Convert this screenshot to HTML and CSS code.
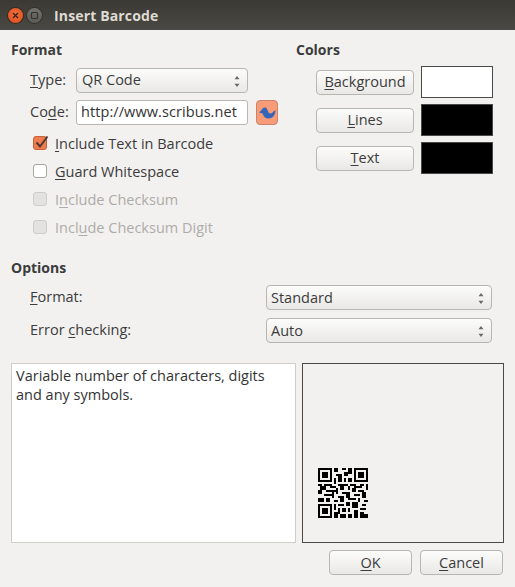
FILE: index.html
```html
<!DOCTYPE html>
<html lang="en">
<head>
<meta charset="utf-8">
<title>Insert Barcode</title>
<link rel="stylesheet" href="styles.css">
</head>
<body>
<div class="window">
  <header class="titlebar">
    <span class="wm wm-close"><svg viewBox="0 0 15 15" width="15" height="15"><path d="M5 5l5 5M10 5l-5 5" stroke="#3a2418" stroke-width="1.4" fill="none"/></svg></span>
    <span class="wm wm-max"><svg viewBox="0 0 15 15" width="15" height="15"><rect x="4.5" y="4.5" width="6" height="6" rx="1" stroke="#33322e" stroke-width="1.2" fill="none"/></svg></span>
    <span class="wm-title">Insert Barcode</span>
  </header>
  <main class="content">
    <div class="top">
      <section class="format">
        <h2 class="heading">Format</h2>
        <div class="field field-first">
          <label class="field-label"><u>T</u>ype:</label>
          <div class="combo combo-type"><span>QR Code</span><svg class="spin" viewBox="0 0 6 11" width="6" height="11"><path d="M3 0L5.5 3.2H0.5zM3 11L0.5 7.8H5.5z" fill="#6a6864"/></svg></div>
        </div>
        <div class="field field-code">
          <label class="field-label">Co<u>d</u>e:</label>
          <div class="input">http://www.scribus.net</div>
          <span class="icon-btn"><svg viewBox="0 0 18 14" width="18" height="14"><path d="M1 6.5L4 3.5C5 1.2 8 .8 9 3L10.5 6.5C12 8 14 7.6 15.5 5.5L17.5 4C17.5 9 14.5 12.5 10.5 12.5C7.5 12.5 5.5 10.5 4.5 7.5z" fill="#3465b8"/></svg></span>
        </div>
        <div class="checks">
          <div class="check"><span class="box box-on"><svg viewBox="0 0 16 16" width="16" height="16"><path d="M3.5 7.5L7 11.5L14.5 1.5" stroke="#4d3a32" stroke-width="2" fill="none"/></svg></span><span><u>I</u>nclude Text in Barcode</span></div>
          <div class="check"><span class="box"></span><span><u>G</u>uard Whitespace</span></div>
          <div class="check check-off"><span class="box"></span><span>I<u>n</u>clude Checksum</span></div>
          <div class="check check-off"><span class="box"></span><span>Incl<u>u</u>de Checksum Digit</span></div>
        </div>
      </section>
      <section class="colors">
        <h2 class="heading">Colors</h2>
        <div class="color-rows">
          <div class="color-row"><button class="btn btn-color"><u>B</u>ackground</button><span class="swatch swatch-white"></span></div>
          <div class="color-row"><button class="btn btn-color"><u>L</u>ines</button><span class="swatch"></span></div>
          <div class="color-row"><button class="btn btn-color"><u>T</u>ext</button><span class="swatch"></span></div>
        </div>
      </section>
    </div>
    <section class="options">
      <h2 class="heading">Options</h2>
      <div class="opt opt-first">
        <label class="opt-label"><u>F</u>ormat:</label>
        <div class="combo combo-wide"><span>Standard</span><svg class="spin" viewBox="0 0 6 11" width="6" height="11"><path d="M3 0L5.5 3.2H0.5zM3 11L0.5 7.8H5.5z" fill="#6a6864"/></svg></div>
      </div>
      <div class="opt">
        <label class="opt-label">Error <u>c</u>hecking:</label>
        <div class="combo combo-wide"><span>Auto</span><svg class="spin" viewBox="0 0 6 11" width="6" height="11"><path d="M3 0L5.5 3.2H0.5zM3 11L0.5 7.8H5.5z" fill="#6a6864"/></svg></div>
      </div>
    </section>
    <div class="panels">
      <div class="desc">Variable number of characters, digits and any symbols.</div>
      <div class="preview">
        <svg class="qr" viewBox="0 0 25 25" width="50" height="50" shape-rendering="crispEdges"><path fill="#000" d="M0 0h7v1H0zM0 6h7v1H0zM0 1h1v5H0zM6 1h1v5H6zM2 2h3v3H2zM18 0h7v1h-7zM18 6h7v1h-7zM18 1h1v5h-1zM24 1h1v5h-1zM20 2h3v3h-3zM0 18h7v1H0zM0 24h7v1H0zM0 19h1v5H0zM6 19h1v5H6zM2 20h3v3H2zM8 0h2v2H8zM12 0h2v1h-2zM15 0h2v3h-2zM9 3h3v1H9zM13 2h2v2h-2zM8 5h1v3H8zM10 4h2v3h-2zM13 5h1v2h-1zM15 5h2v2h-2zM0 8h2v1H0zM3 8h4v1H3zM10 8h5v1h-5zM16 8h3v1h-3zM21 8h2v1h-2zM1 9h3v2H1zM6 9h3v1H6zM11 9h2v2h-2zM15 9h1v2h-1zM18 9h4v1h-4zM24 8h1v3h-1zM0 11h2v2H0zM4 11h5v1H4zM9 10h1v3H9zM12 12h4v1h-4zM17 10h2v2h-2zM20 11h3v1h-3zM3 13h4v1H3zM7 12h1v3H7zM10 14h3v1h-3zM14 13h2v2h-2zM18 13h3v1h-3zM22 12h2v3h-2zM0 15h3v2H0zM4 15h2v2H4zM8 16h2v1H8zM11 15h2v2h-2zM15 15h4v1h-4zM20 15h1v2h-1zM23 16h2v1h-2zM8 18h1v3H8zM10 18h3v1h-3zM14 17h2v2h-2zM17 17h3v3h-3zM22 18h2v1h-2zM10 20h1v3h-1zM12 20h2v2h-2zM15 20h1v2h-1zM21 20h3v1h-3zM8 22h2v3H8zM11 23h3v2h-3zM15 23h2v2h-2zM18 21h2v2h-2zM21 22h2v3h-2zM18 23h2v2h-2zM23 23h2v2h-2z"/></svg>
      </div>
    </div>
    <footer class="actions">
      <button class="btn btn-action"><u>O</u>K</button>
      <button class="btn btn-action"><u>C</u>ancel</button>
    </footer>
  </main>
</div>
</body>
</html>
```

FILE: styles.css
```css
* { box-sizing: border-box; }
html, body { margin: 0; padding: 0; }
body {
  width: 515px;
  height: 587px;
  overflow: hidden;
  background: #f2f1f0;
  color: #3c3c3c;
  font-family: "Open Sans", "Noto Sans", sans-serif;
  font-size: 14.5px;
}
u { text-underline-offset: 2px; text-decoration-thickness: 1px; }
.window { display: flex; flex-direction: column; height: 587px; }

.titlebar {
  height: 30px;
  flex: none;
  display: flex;
  align-items: center;
  padding-left: 8px;
  background: linear-gradient(#3a3934, #4a4944);
}
.wm { width: 15px; height: 15px; border-radius: 50%; display: block; }
.wm svg { display: block; }
.wm-close { background: radial-gradient(circle at 50% 40%, #f4703f, #dd4814); box-shadow: 0 0 0 1px #3a2a20; }
.wm-max { margin-left: 4px; background: linear-gradient(#72716c, #5c5b56); box-shadow: 0 0 0 1px #33322e; }
.wm-title { margin-left: 12px; color: #dfdbd2; font-weight: 700; font-size: 14px; letter-spacing: 0.15px; }

.content { padding: 11px 11px 0; flex: 1; }
.heading { margin: 0; font-size: 14px; line-height: 18px; font-weight: 700; color: #3c3c3c; }

.top { display: flex; }
.format { width: 285px; flex: none; }
.field { display: flex; align-items: center; height: 25px; padding-left: 19px; }
.field-first { margin-top: 9px; }
.field-code { margin-top: 7px; }
.field-label { width: 46px; flex: none; margin-bottom: 2px; }

.combo {
  height: 25px;
  display: flex;
  align-items: center;
  justify-content: space-between;
  padding: 0 7px 0 5px;
  border: 1px solid #b8b6b1;
  border-radius: 4px;
  background: linear-gradient(#fcfcfb, #e9e8e6);
}
.combo-type span { margin-bottom: 2px; }
.combo-type { width: 172px; }
.combo-wide { width: 226px; padding-left: 4px; }
.spin { display: block; margin-top: 2px; }
.input {
  width: 172px;
  height: 25px;
  line-height: 21px;
  padding-left: 4px;
  border: 1px solid #b8b6b1;
  border-radius: 3px;
  background: #fff;
  color: #333;
  letter-spacing: 0.08px;
}
.icon-btn {
  width: 22px;
  height: 25px;
  margin-left: 8px;
  display: flex;
  align-items: center;
  justify-content: center;
  border: 1px solid #c9846a;
  border-radius: 4px;
  background: #f79b78;
}

.checks { margin-top: 4px; padding-left: 22px; }
.check { display: flex; align-items: center; height: 28px; }
.box {
  width: 14px;
  height: 14px;
  flex: none;
  margin-right: 8px;
  position: relative;
  border: 1px solid #a8a6a1;
  border-radius: 3px;
  background: #fff;
}
.box svg { position: absolute; left: -1px; top: -2px; }
.box-on { background: #ef7b4e; border-color: #c4623a; }
.check-off { color: #aeaca8; }
.check-off .box { background: #e3e2e0; border-color: #cfcdc9; }

.colors { flex: 1; }
.color-rows { margin-top: 7px; display: flex; flex-direction: column; gap: 6px; padding-left: 20px; }
.color-row { display: flex; align-items: center; gap: 7px; height: 32px; }
.btn {
  font: inherit;
  color: #3c3c3c;
  height: 25px;
  padding: 0;
  border: 1px solid #b8b6b1;
  border-radius: 4px;
  background: linear-gradient(#fcfcfb, #e9e8e6);
}
.btn-color { width: 98px; padding-bottom: 2px; }
.swatch { width: 72px; height: 32px; background: #000; border: 1px solid #4a4a4a; }
.swatch-white { background: #fff; }

.options { margin-top: 18px; }
.opt { display: flex; align-items: center; justify-content: space-between; height: 25px; padding: 0 12px 0 19px; margin-top: 8px; }
.opt-first { margin-top: 8px; }
.opt-label { margin-bottom: 2px; }

.panels { display: flex; gap: 6px; margin-top: 20px; height: 180px; }
.desc {
  width: 285px;
  padding: 2px 4px;
  line-height: 19px;
  background: #fff;
  border: 1px solid #cfcdc9;
  color: #333;
}
.preview {
  width: 202px;
  display: flex;
  align-items: flex-end;
  padding: 0 0 24px 15px;
  border: 1px solid #4a4a48;
}
.qr { display: block; }

.actions { display: flex; justify-content: flex-end; gap: 8px; margin-top: 7px; padding-right: 1px; }
.btn-action { width: 83px; }
```
